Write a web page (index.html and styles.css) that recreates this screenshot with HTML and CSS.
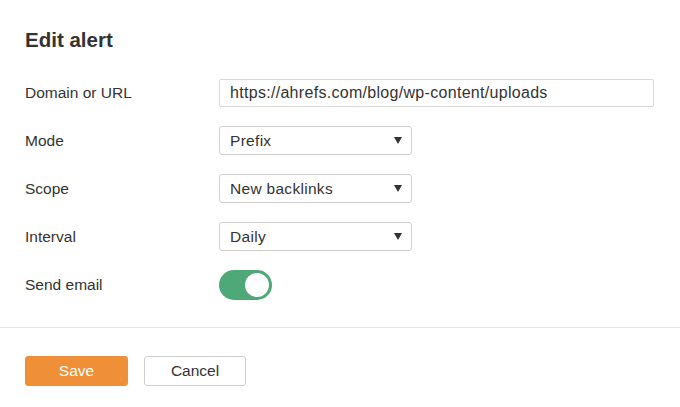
FILE: index.html
```html
<!DOCTYPE html>
<html>
<head>
<meta charset="utf-8">
<link rel="stylesheet" href="styles.css">
</head>
<body>
<div class="dialog">
  <div class="body">
    <h1 class="title">Edit alert</h1>
    <div class="form">
      <div class="row">
        <div class="label">Domain or URL</div>
        <div class="input">https://ahrefs.com/blog/wp-content/uploads</div>
      </div>
      <div class="row">
        <div class="label">Mode</div>
        <div class="select"><span>Prefix</span><i class="caret"></i></div>
      </div>
      <div class="row">
        <div class="label">Scope</div>
        <div class="select"><span>New backlinks</span><i class="caret"></i></div>
      </div>
      <div class="row">
        <div class="label">Interval</div>
        <div class="select"><span>Daily</span><i class="caret"></i></div>
      </div>
      <div class="row">
        <div class="label">Send email</div>
        <div class="toggle"><span class="knob"></span></div>
      </div>
    </div>
  </div>
  <div class="footer">
    <button class="btn btn-primary">Save</button>
    <button class="btn btn-default">Cancel</button>
  </div>
</div>
</body>
</html>
```

FILE: styles.css
```css
html, body {
  margin: 0;
  padding: 0;
  background: #fff;
}
body {
  font-family: "Liberation Sans", Arial, sans-serif;
  color: #333;
  font-size: 15.5px;
}
.body {
  padding: 28px 25px 27px;
  border-bottom: 1px solid #e6e6e6;
}
.title {
  margin: 0 0 26px;
  font-size: 20.5px;
  line-height: 24px;
  font-weight: bold;
  color: #333;
}
.form {
  display: flex;
  flex-direction: column;
  gap: 19px;
}
.row {
  display: flex;
  align-items: center;
  min-height: 29px;
}
.label {
  width: 194px;
  flex: none;
  line-height: 18px;
}
.input {
  box-sizing: border-box;
  width: 435px;
  height: 28px;
  border: 1px solid #d9d9d9;
  border-radius: 2px;
  padding: 0 10px;
  display: flex;
  align-items: center;
  font-size: 16px;
  letter-spacing: 0.3px;
}
.select {
  box-sizing: border-box;
  width: 193px;
  height: 29px;
  border: 1px solid #d0d0d0;
  border-radius: 3px;
  padding: 0 9px 0 10px;
  display: flex;
  align-items: center;
  justify-content: space-between;
  letter-spacing: 0.3px;
}
.caret {
  width: 0;
  height: 0;
  border-left: 4.5px solid transparent;
  border-right: 4.5px solid transparent;
  border-top: 7px solid #333;
}
.toggle {
  box-sizing: border-box;
  width: 53px;
  height: 30px;
  border-radius: 15px;
  background: #4fa877;
  padding: 3px;
  display: flex;
  justify-content: flex-end;
}
.knob {
  width: 24px;
  height: 24px;
  border-radius: 50%;
  background: #fff;
}
.footer {
  padding: 28px 25px;
  display: flex;
  gap: 16px;
}
.btn {
  box-sizing: border-box;
  height: 30px;
  font-family: inherit;
  font-size: 15.5px;
  border-radius: 3px;
  padding: 0;
}
.btn-primary {
  width: 103px;
  background: #ef9038;
  border: 1px solid #ef9038;
  color: #fff;
}
.btn-default {
  width: 102px;
  background: #fff;
  border: 1px solid #cfcfcf;
  color: #333;
}
```
